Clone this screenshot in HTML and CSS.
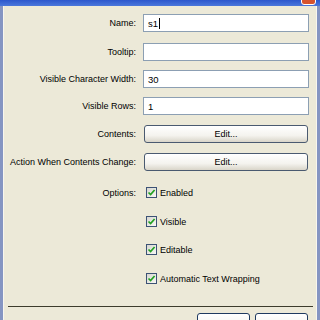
FILE: index.html
```html
<!DOCTYPE html>
<html>
<head>
<meta charset="utf-8">
<link rel="stylesheet" href="styles.css">
</head>
<body>
<div class="window">
  <div class="titlebar"><span class="close"></span></div>
  <div class="frame">
    <div class="form">
      <div class="row r-name"><span class="lbl">Name:</span><div class="input">s1<span class="caret"></span></div></div>
      <div class="row r-tooltip"><span class="lbl">Tooltip:</span><div class="input"></div></div>
      <div class="row r-width"><span class="lbl">Visible Character Width:</span><div class="input">30</div></div>
      <div class="row r-rows"><span class="lbl">Visible Rows:</span><div class="input">1</div></div>
      <div class="row r-contents"><span class="lbl">Contents:</span><button class="btn edit">Edit...</button></div>
      <div class="row r-action"><span class="lbl">Action When Contents Change:</span><button class="btn edit">Edit...</button></div>
      <div class="row check-row r-enabled"><span class="lbl">Options:</span><div class="opt"><span class="box"><svg viewBox="0 0 9 9" width="9" height="9"><path d="M1.5 4.5 L3.6 6.6 L7.6 2" fill="none" stroke="#21a121" stroke-width="1.7"/></svg></span>Enabled</div></div>
      <div class="row check-row r-visible"><span class="lbl"></span><div class="opt"><span class="box"><svg viewBox="0 0 9 9" width="9" height="9"><path d="M1.5 4.5 L3.6 6.6 L7.6 2" fill="none" stroke="#21a121" stroke-width="1.7"/></svg></span>Visible</div></div>
      <div class="row check-row r-editable"><span class="lbl"></span><div class="opt"><span class="box"><svg viewBox="0 0 9 9" width="9" height="9"><path d="M1.5 4.5 L3.6 6.6 L7.6 2" fill="none" stroke="#21a121" stroke-width="1.7"/></svg></span>Editable</div></div>
      <div class="row check-row r-wrap"><span class="lbl"></span><div class="opt"><span class="box"><svg viewBox="0 0 9 9" width="9" height="9"><path d="M1.5 4.5 L3.6 6.6 L7.6 2" fill="none" stroke="#21a121" stroke-width="1.7"/></svg></span>Automatic Text Wrapping</div></div>
    </div>
    <div class="sep"></div>
    <div class="actions"><button class="btn dlg">OK</button><button class="btn dlg">Cancel</button></div>
  </div>
</div>
</body>
</html>
```
FILE: styles.css
```css
html, body {
  margin: 0;
  padding: 0;
  overflow: hidden;
  background: #ece9d8;
}
body {
  width: 320px;
  height: 320px;
  font-family: "Liberation Sans", Arial, sans-serif;
  font-size: 9px;
  color: #000;
}
.window {
  width: 320px;
  height: 320px;
  display: flex;
  flex-direction: column;
}
.titlebar {
  height: 6px;
  flex: none;
  background: linear-gradient(#2c57cc, #4a77db);
  position: relative;
}
.close {
  position: absolute;
  right: 4px;
  top: -3px;
  width: 13px;
  height: 6px;
  background: #d6532e;
  border: 1px solid #fff;
  border-radius: 0 0 3px 3px;
}
.frame {
  flex: 1;
  display: flex;
  flex-direction: column;
  border-left: 3px solid #8595c2;
  border-right: 3px solid #8595c2;
  background: #ece9d8;
  box-shadow: inset 1px 0 #f8f6ee, inset -1px 0 #f8f6ee;
}
.form {
  padding-top: 8px;
  display: flex;
  flex-direction: column;
}
.row {
  display: grid;
  grid-template-columns: 133px 166px;
  column-gap: 7px;
  align-items: center;
  height: 18px;
}
.lbl {
  text-align: right;
  white-space: nowrap;
}
.input {
  height: 18px;
  box-sizing: border-box;
  border: 1px solid #8c9fb3;
  background: #fff;
  padding-left: 4px;
  display: flex;
  align-items: center;
  font-size: 9.5px;
}
.caret {
  width: 1px;
  height: 11px;
  background: #000;
  margin-left: 1px;
}
.btn {
  font-family: "Liberation Sans", Arial, sans-serif;
  font-size: 9px;
  color: #000;
  border: 1px solid #1f3a60;
  border-radius: 3px;
  background: linear-gradient(#ffffff, #f4f3ee 60%, #d9d5c9);
  padding: 0;
  box-sizing: border-box;
}
.edit {
  height: 18px;
  margin: 0 1px;
  border-color: #4a5a70;
}
.r-tooltip { margin-top: 11px; }
.r-width { margin-top: 9px; }
.r-rows { margin-top: 9px; }
.r-contents { margin-top: 10px; }
.r-action { margin-top: 10px; }
.check-row { height: 17px; }
.r-enabled { margin-top: 13px; }
.r-visible { margin-top: 12px; }
.r-editable { margin-top: 11px; }
.r-wrap { margin-top: 12px; }
.opt {
  display: flex;
  align-items: center;
  gap: 3px;
  padding-left: 3px;
}
.box {
  width: 11px;
  height: 11px;
  box-sizing: border-box;
  border: 1px solid #3c5275;
  background: linear-gradient(135deg, #d6d6d0, #f8f8f4);
  display: flex;
  align-items: center;
  justify-content: center;
}
.sep {
  margin: 19px 4px 0 5px;
  border-top: 1px solid #3d3c2c;
}
.actions {
  display: flex;
  justify-content: flex-end;
  gap: 5px;
  padding: 6px 9px 0 0;
}
.dlg {
  width: 53px;
  height: 23px;
}
```
